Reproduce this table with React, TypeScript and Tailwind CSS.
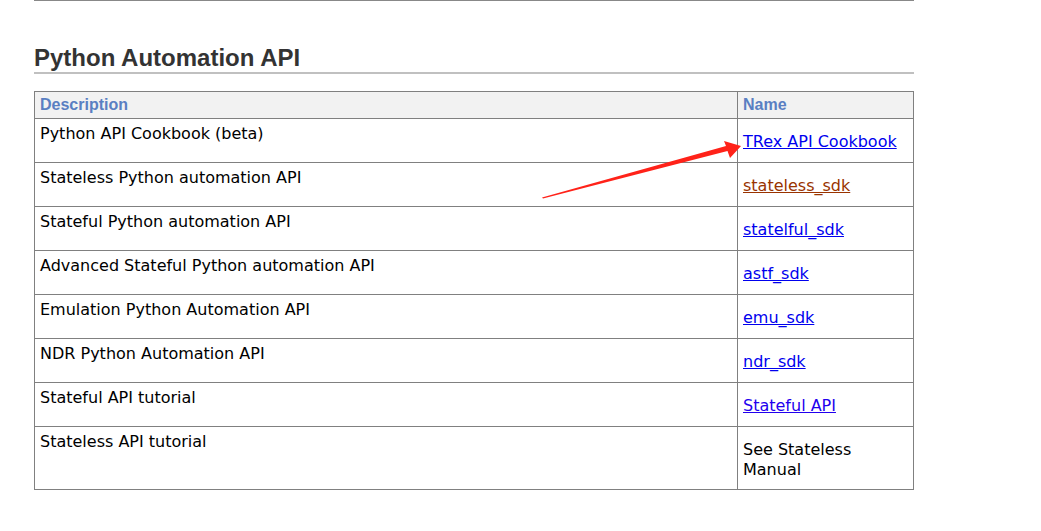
import React from "react";

const rows: { d: string; n: React.ReactNode }[] = [
  { d: "Python API Cookbook (beta)", n: <a className="text-[#0000ee] underline">TRex API Cookbook</a> },
  { d: "Stateless Python automation API", n: <a className="text-[#993300] underline">stateless_sdk</a> },
  { d: "Stateful Python automation API", n: <a className="text-[#0000ee] underline">statelful_sdk</a> },
  { d: "Advanced Stateful Python automation API", n: <a className="text-[#0000ee] underline">astf_sdk</a> },
  { d: "Emulation Python Automation API", n: <a className="text-[#0000ee] underline">emu_sdk</a> },
  { d: "NDR Python Automation API", n: <a className="text-[#0000ee] underline">ndr_sdk</a> },
  { d: "Stateful API tutorial", n: <a className="text-[#2200ee] underline">Stateful API</a> },
];

export default function App() {
  return (
    <div className="relative w-[1041px] h-[531px] bg-white overflow-hidden" style={{ fontFamily: '"DejaVu Sans", Verdana, sans-serif' }}>
      <div className="ml-[34px] w-[880px]">
        <div className="h-px bg-[#888888]" />
        <h2 className="mt-[43px] border-b-2 border-[#c0c0c0] text-[24px] leading-[28px] font-bold text-[#333333]" style={{ fontFamily: '"Liberation Sans", Arial, sans-serif' }}>
          Python Automation API
        </h2>
        <table className="mt-[17px] w-[879px] table-fixed border-collapse text-[16px] leading-[20px] text-black">
          <colgroup>
            <col className="w-[703px]" />
            <col className="w-[176px]" />
          </colgroup>
          <thead>
            <tr className="h-[27px] bg-[#f2f2f2]">
              {["Description", "Name"].map((h) => (
                <th key={h} className="border border-[#808080] px-[5px] text-left align-middle font-bold text-[16px] text-[#5a7fc2]" style={{ fontFamily: '"Liberation Sans", Arial, sans-serif' }}>
                  {h}
                </th>
              ))}
            </tr>
          </thead>
          <tbody>
            {rows.map((r) => (
              <tr key={r.d} className="h-[44px]">
                <td className="border border-[#808080] px-[5px] pt-[5px] align-top">{r.d}</td>
                <td className="border border-[#808080] px-[5px] pt-[3px] align-middle">{r.n}</td>
              </tr>
            ))}
            <tr className="h-[63px]">
              <td className="border border-[#808080] px-[5px] pt-[5px] align-top">Stateless API tutorial</td>
              <td className="border border-[#808080] px-[5px] pt-[3px] align-middle">See Stateless Manual</td>
            </tr>
          </tbody>
        </table>
      </div>
      <svg className="absolute left-0 top-0 pointer-events-none" width="1041" height="531">
        <polygon points="542,197.5 726,146 724,141 741,146 730,158 727.5,151 543,198.5" fill="#ff2219" />
      </svg>
    </div>
  );
}
